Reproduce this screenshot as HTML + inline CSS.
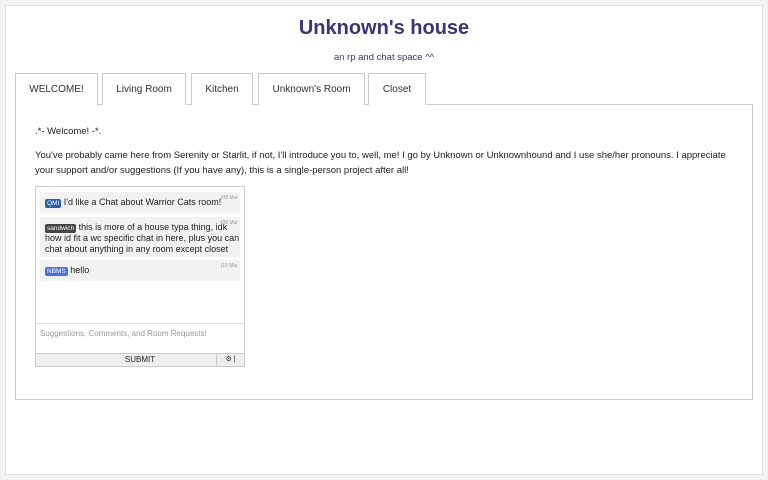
<!DOCTYPE html>
<html><head><meta charset="utf-8"><style>
*{box-sizing:border-box;margin:0;padding:0}
body{width:768px;height:480px;background:#f3f3f3;font-family:"Liberation Sans",sans-serif;position:relative;overflow:hidden}
.card{position:absolute;left:5px;top:5px;width:758px;height:470px;background:#fff;border:1px solid #e2e2e2}
h1{position:absolute;left:0;width:768px;top:17px;text-align:center;font-size:20px;color:#3c3570;font-weight:bold}
.sub{position:absolute;left:0;width:768px;top:52px;text-align:center;font-size:9.5px;color:#3c3570}
.tab{position:absolute;top:73px;height:32px;border:1px solid #ccc;border-bottom:none;background:#fff;font-size:10px;color:#333;text-align:center;line-height:31px}
.box{position:absolute;left:15px;top:104px;width:738px;height:296px;border:1px solid #ccc}
.p{position:absolute;left:35px;font-size:9.5px;color:#222;line-height:15px}
.chat{position:absolute;left:35px;top:186px;width:210px;height:181px;border:1px solid #ccc;background:#fff}
.msg{position:absolute;left:4px;width:200px;background:#f2f2f2;font-size:9px;color:#222;line-height:11px;padding:3px 5px;white-space:nowrap}
.tm{position:absolute;right:2px;top:1px;font-size:5px;color:#999}
.tg{display:inline-block;color:#fff;font-size:6.5px;padding:0 2px;border-radius:2px;line-height:9px}
</style></head><body>
<div class="card"></div>
<h1>Unknown's house</h1>
<div class="sub">an rp and chat space ^^</div>
<div class="box"></div>
<div class="tab" style="left:15px;width:83px;height:33px;">WELCOME!</div>
<div class="tab" style="left:102px;width:84px">Living Room</div>
<div class="tab" style="left:191px;width:62px">Kitchen</div>
<div class="tab" style="left:258px;width:107px">Unknown's Room</div>
<div class="tab" style="left:368px;width:58px">Closet</div>
<div class="p" style="top:124px">.*- Welcome! -*.</div>
<div class="p" style="top:148px;width:700px">You've probably came here from Serenity or Starlit, if not, I'll introduce you to, well, me! I go by Unknown or Unknownhound and I use she/her pronouns. I appreciate your support and/or suggestions (If you have any), this is a single-person project after all!</div>
<div class="chat">
<div class="msg" style="top:5px;height:21px;padding-top:5px"><span class="tg" style="background:#2a5fb0">QMI</span> I'd like a Chat about Warrior Cats room!<span class="tm">|08 Mar</span></div>
<div class="msg" style="top:30px;height:40px;padding-top:5px"><span class="tg" style="background:#444">sandwich</span> this is more of a house typa thing, idk<br>how id fit a wc specific chat in here, plus you can<br>chat about anything in any room except closet<span class="tm">|08 Mar</span></div>
<div class="msg" style="top:73px;height:21px;padding-top:5px"><span class="tg" style="background:#4a6fe0">NBMS</span> hello<span class="tm">|15 Mar</span></div>
<div style="position:absolute;left:0;top:136px;width:208px;border-top:1px solid #ddd;font-size:8px;color:#999;padding:5px 4px">Suggestions, Comments, and Room Requests!</div>
<div style="position:absolute;left:0;top:166px;width:208px;height:13px;background:#eee;border-top:1px solid #ccc;font-size:8px;text-align:center;line-height:12px;color:#222">SUBMIT<span style="position:absolute;right:0;top:0;width:28px;height:12px;border-left:1px solid #ccc;font-size:7px">⚙ |</span></div>
</div>
</body></html>
